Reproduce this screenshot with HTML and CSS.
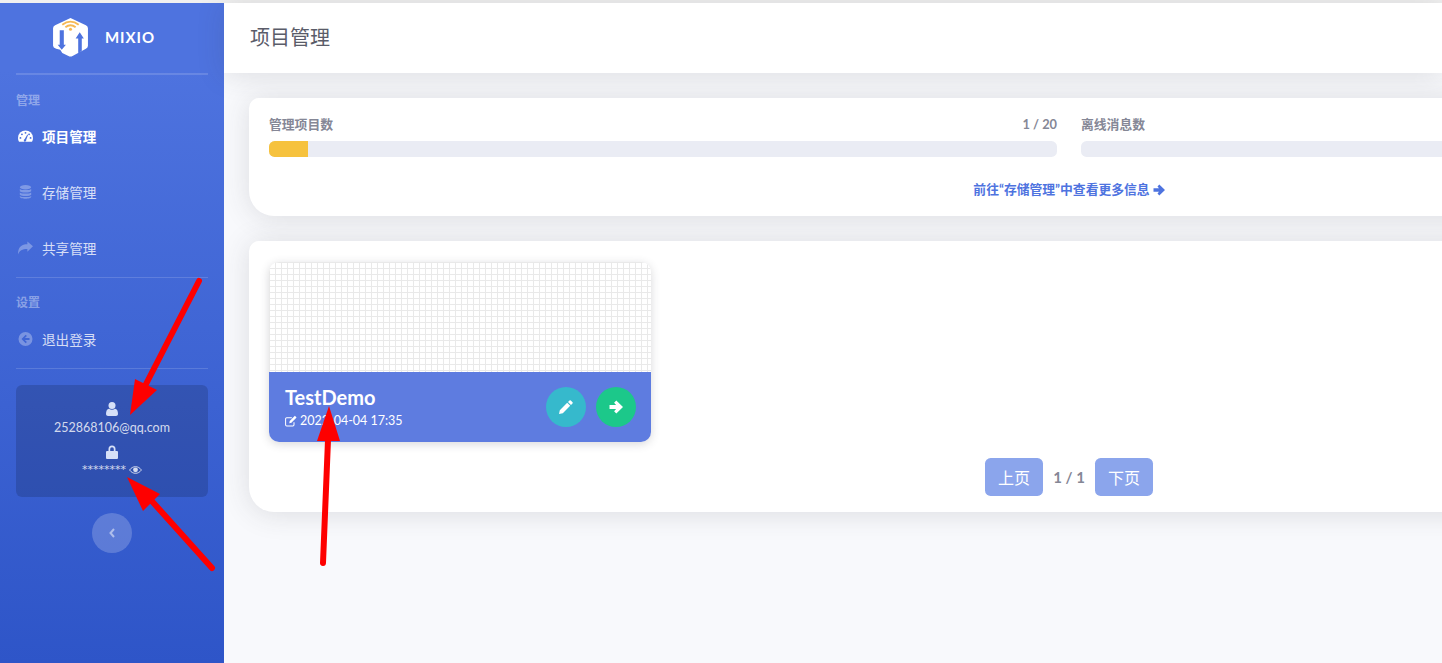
FILE: index.html
```html
<!DOCTYPE html>
<html lang="zh-CN">

<head>
  <meta charset="UTF-8">
  <meta name="viewport" content="width=device-width, initial-scale=1.0">
  <title>项目管理</title>
  <link rel="stylesheet" href="styles.css">
</head>

<body>
  <div class="wrapper">
    <aside class="sidebar">
      <a class="brand" href="#">
        <svg class="brand-logo" viewBox="0 0 34 38">
          <path fill="#fff" fill-rule="evenodd" d="M17 0 32 7Q34 8 34 10V27Q34 29 32 30L19 37Q17 38 15 37L9 34 7 31 3 30Q0 29 0 27V10Q0 8 2 7ZM6.500 12H10.500V26H12.500L8.500 31 4.500 26H6.500ZM26 14 30 20H28V32L24.500 34V20H22Z" />
          <path fill="none" stroke="#f6b955" stroke-width="1.800" d="M9 6.500Q17 .5 25 6.500M12 9Q17 5 22 9" />
          <circle cx="17" cy="11" r="1.500" fill="#f6b955" />
        </svg>
        <span>MIXIO</span>
      </a>
      <hr class="divider divider-top">
      <div class="side-heading">管理</div>
      <a class="nav-link active" href="#">
        <svg class="nav-icon" viewBox="0 0 16 12"><path d="M8 0a8 8 0 0 0-8 8c0 1.500.4 2.900 1.100 4h13.800A8 8 0 0 0 16 8a8 8 0 0 0-8-8z" /><g fill="#4a6fdc"><circle cx="2.600" cy="8" r="1" /><circle cx="4.200" cy="4.200" r="1" /><circle cx="8" cy="2.600" r="1" /><circle cx="13.400" cy="8" r="1" /><circle cx="11.800" cy="4.200" r="1" /><path d="M7 9.500l3-5 .7.300-2 5.500a1.300 1.300 0 1 1-1.700-.8z" /></g></svg>
        项目管理
      </a>
      <a class="nav-link" href="#">
        <svg class="nav-icon" viewBox="0 0 14 16"><ellipse cx="7" cy="2.500" rx="6.500" ry="2.500" /><path d="M.5 4.500C2 6.300 12 6.300 13.500 4.500V7C12 9 2 9 .5 7zM.5 8.500c1.500 1.800 11.500 1.800 13 0V11c-1.500 2-11.500 2-13 0zM.5 12.500c1.500 1.800 11.500 1.800 13 0v1c0 3-13 3-13 0z" /></svg>
        存储管理
      </a>
      <a class="nav-link" href="#">
        <svg class="nav-icon" viewBox="0 0 16 14"><path d="M16 5 10 0v3C4 3 0 5.500 0 14c1.500-4.500 4.500-6 10-6v3z" /></svg>
        共享管理
      </a>
      <hr class="divider divider-mid">
      <div class="side-heading heading-settings">设置</div>
      <a class="nav-link nav-logout" href="#">
        <svg class="nav-icon" viewBox="0 0 14 14"><path fill-rule="evenodd" d="M7 0a7 7 0 1 1 0 14A7 7 0 0 1 7 0zM7.200 2.800 3 7l4.200 4.200 1.200-1.200-2-2H11V6H6.400l2-2z" /></svg>
        退出登录
      </a>
      <hr class="divider">
      <div class="account-box">
        <svg class="account-icon" viewBox="0 0 12 14"><circle cx="6" cy="3.500" r="3.500" /><path d="M0 12c0-3 1-5 3-5.200 1.600 1.300 4.400 1.300 6 0 2 .2 3 2.200 3 5.200 0 1.300-1 2-2 2H2c-1 0-2-.7-2-2z" /></svg>
        <div class="account-text">252868106@qq.com</div>
        <svg class="account-icon icon-lock" viewBox="0 0 12 14"><path fill-rule="evenodd" d="M2.500 6V4a3.500 3.500 0 0 1 7 0v2h1.500a1 1 0 0 1 1 1v6a1 1 0 0 1-1 1H1a1 1 0 0 1-1-1V7a1 1 0 0 1 1-1zm1.700 0h3.600V4a1.800 1.800 0 0 0-3.600 0z" /></svg>
        <div class="account-text account-pass">
          ********
          <svg class="eye-icon" viewBox="0 0 14 10"><path fill="none" stroke="currentColor" stroke-width="1" d="M.6 5C4 .2 10 .2 13.400 5 10 9.800 4 9.800.6 5z" /><circle cx="7" cy="4.800" r="2.600" fill="currentColor" /></svg>
        </div>
      </div>
      <button class="toggle-btn" type="button">
        <svg viewBox="0 0 8 12"><path fill="none" stroke="currentColor" stroke-width="2" d="M6 2 2.500 6 6 10" /></svg>
      </button>
    </aside>

    <main class="main">
      <header class="topbar">
        <h1>项目管理</h1>
      </header>

      <div class="content">
        <section class="panel panel-stats">
          <div class="stat-row">
            <div class="stat">
              <div class="stat-label"><span>管理项目数</span><span>1 / 20</span></div>
              <div class="progress"><div class="progress-bar" style="width: 5%"></div></div>
            </div>
            <div class="stat">
              <div class="stat-label"><span>离线消息数</span></div>
              <div class="progress"></div>
            </div>
          </div>
          <a class="more-link" href="#">前往“存储管理”中查看更多信息
            <svg viewBox="0 0 12 12"><path d="M6.300.6 12 6l-5.700 5.400-1.800-1.800L6 7.800H.5V4.200H6L4.500 2.400z" /></svg>
          </a>
        </section>

        <section class="panel panel-projects">
          <article class="project-card">
            <div class="project-preview"></div>
            <div class="project-footer">
              <div class="project-info">
                <div class="project-name">TestDemo</div>
                <div class="project-date">
                  <svg viewBox="0 0 14 13"><path fill="none" stroke="#fff" stroke-width="1.200" d="M10.500 8v3a1.300 1.300 0 0 1-1.300 1.300H2A1.300 1.300 0 0 1 .7 11V4A1.300 1.300 0 0 1 2 2.700h6" /><path fill="#fff" d="M11.500.5 13.500 2.500 7.500 8.500 5 9 5.500 6.500z" /></svg>
                  2022-04-04 17:35
                </div>
              </div>
              <button class="round-btn btn-edit" type="button">
                <svg viewBox="0 0 14 14"><path d="M10.500.5a1 1 0 0 1 1.300 0l1.700 1.700a1 1 0 0 1 0 1.300L12 5 9 2zM8.200 2.800l3 3-7.400 7.400L0 14l.8-3.800z" /></svg>
              </button>
              <button class="round-btn btn-open" type="button">
                <svg viewBox="0 0 14 14"><path d="M7.300.6 14 7l-6.700 6.400-2.200-2.200 2-2.200H.5V5H7.100l-2-2.200z" /></svg>
              </button>
            </div>
          </article>
          <nav class="pager">
            <button class="page-btn" type="button">上页</button>
            <span class="page-count">1 / 1</span>
            <button class="page-btn" type="button">下页</button>
          </nav>
        </section>
      </div>
    </main>
  </div>

  <!-- annotations drawn over the screenshot -->
  <svg class="arrows" viewBox="0 0 1442 663">
    <g fill="#fe0000" stroke="#fe0000" stroke-linecap="round">
      <path fill="none" stroke-width="6" d="M199 281 144 388" />
      <path stroke="none" d="M130 415 135 379 157 390z" />
      <path fill="none" stroke-width="6" d="M212 568 150 499" />
      <path stroke="none" d="M127 477 160 494 143 511z" />
      <path fill="none" stroke-width="6" d="M323 563 328 440" />
      <path stroke="none" d="M329 406 317 441 340 441z" />
    </g>
  </svg>
</body>

</html>
```

FILE: styles.css
```css
* {
  box-sizing: border-box;
}

html,
body {
  height: 100%;
}

body {
  margin: 0;
  padding-top: 3px;
  overflow: hidden;
  background-color: #f0f0f0;
  font-family: "Lato", "Noto Sans CJK SC", sans-serif;
  color: #858796;
}

a {
  text-decoration: none;
}

button {
  border: 0;
  font-family: inherit;
  cursor: pointer;
}

.wrapper {
  display: flex;
  height: 660px;
}

/* sidebar */
.sidebar {
  flex: 0 0 224px;
  display: flex;
  flex-direction: column;
  padding: 0 16px;
  background-image: linear-gradient(180deg, #4e73df 10%, #2e55c8 100%);
}

.brand {
  display: flex;
  align-items: center;
  justify-content: center;
  gap: 17px;
  height: 70px;
  padding: 0 16px 2px 0;
  color: #fff;
  font-size: 15px;
  font-weight: 700;
  letter-spacing: 1px;
}

.brand-logo {
  width: 35px;
  height: 39px;
}

.divider {
  width: 100%;
  height: 0;
  margin: 0;
  border: 0;
  border-top: 1px solid rgba(255, 255, 255, .15);
}

.divider-top {
  border-top-width: 2px;
}

.divider-mid {
  margin-top: 1px;
}

.side-heading {
  margin-top: 18px;
  font-size: 12px;
  line-height: 16px;
  font-weight: 700;
  color: rgba(255, 255, 255, .4);
}

.heading-settings {
  margin-top: 17px;
}

.nav-link {
  display: flex;
  align-items: center;
  gap: 9px;
  height: 56px;
  padding-left: 2px;
  font-size: 13.6px;
  color: rgba(255, 255, 255, .8);
}

.nav-link.active {
  margin-top: -1px;
  color: #fff;
  font-weight: 700;
}

.nav-logout {
  height: 55px;
  margin-bottom: 2px;
}

.nav-icon {
  flex: none;
  width: 15px;
  height: 14px;
  fill: rgba(255, 255, 255, .3);
}

.active .nav-icon {
  fill: #fff;
}

.account-box {
  display: flex;
  flex-direction: column;
  align-items: center;
  height: 112px;
  margin-top: 16px;
  padding-top: 17px;
  border-radius: 6px;
  background-color: rgba(0, 0, 0, .15);
  color: rgba(255, 255, 255, .8);
}

.account-icon {
  width: 12px;
  height: 14px;
  fill: #d6e0f8;
}

.icon-lock {
  margin-top: 9px;
}

.account-text {
  margin-top: 4px;
  font-size: 12.5px;
  line-height: 16px;
}

.account-pass {
  display: flex;
  align-items: center;
  gap: 3px;
  margin-top: 3px;
  font-family: "DejaVu Sans", sans-serif;
  font-size: 11px;
}

.eye-icon {
  width: 13px;
  height: 10px;
}

.toggle-btn {
  display: flex;
  align-items: center;
  justify-content: center;
  align-self: center;
  width: 40px;
  height: 40px;
  margin-top: 16px;
  padding: 0;
  border-radius: 50%;
  background-color: rgba(255, 255, 255, .2);
  color: rgba(255, 255, 255, .5);
}

.toggle-btn svg {
  width: 8px;
  height: 12px;
}

/* main column */
.main {
  flex: 1;
  min-width: 0;
  background-color: #f8f9fc;
}

.topbar {
  display: flex;
  align-items: center;
  height: 70px;
  padding: 0 0 4px 26px;
  background-color: #fff;
  box-shadow: 0 2px 28px rgba(58, 59, 69, .15);
}

.topbar h1 {
  margin: 0;
  font-size: 20px;
  font-weight: 400;
  color: #5a5c69;
}

.content {
  width: 1640px;
  margin-left: 25px;
  padding-top: 25px;
}

.panel {
  border-radius: 10px 10px 25px 25px;
  background-color: #fff;
  box-shadow: 0 2px 28px rgba(58, 59, 69, .15);
}

.panel-stats {
  height: 118px;
  padding: 18px 20px 0;
}

.stat-row {
  display: flex;
  gap: 24px;
}

.stat {
  flex: 1;
}

.stat-label {
  display: flex;
  justify-content: space-between;
  font-size: 12.8px;
  line-height: 17px;
  font-weight: 700;
}

.progress {
  height: 16px;
  margin-top: 8px;
  overflow: hidden;
  border-radius: 5.6px;
  background-color: #eaecf4;
}

.progress-bar {
  height: 100%;
  background-color: #f6c23e;
}

.more-link {
  display: flex;
  align-items: center;
  justify-content: center;
  gap: 3px;
  margin-top: 24px;
  font-size: 12.8px;
  line-height: 17px;
  font-weight: 700;
  color: #4e73df;
}

.more-link svg {
  width: 12px;
  height: 12px;
  fill: currentColor;
}

.panel-projects {
  height: 271px;
  margin-top: 25px;
  padding: 21px 20px 0;
}

.project-card {
  width: 382px;
  height: 180px;
  overflow: hidden;
  border-radius: 10px;
  box-shadow: 0 2px 10px rgba(58, 59, 69, .2);
}

.project-preview {
  height: 110px;
  background-color: #fff;
  background-image:
    linear-gradient(#e9e9e9 1px, transparent 1px),
    linear-gradient(90deg, #e9e9e9 1px, transparent 1px);
  background-size: 6px 6px;
}

.project-footer {
  display: flex;
  align-items: center;
  gap: 10px;
  height: 70px;
  padding: 0 15px 0 16px;
  background-color: #5e7ce0;
  color: #fff;
}

.project-info {
  display: flex;
  flex-direction: column;
  gap: 3px;
  flex: 1;
}

.project-name {
  font-size: 20px;
  line-height: 24px;
  font-weight: 700;
}

.project-date {
  display: flex;
  align-items: center;
  gap: 3px;
  font-size: 12.5px;
  line-height: 18px;
}

.project-date svg {
  width: 12px;
  height: 12px;
}

.round-btn {
  display: flex;
  align-items: center;
  justify-content: center;
  width: 40px;
  height: 40px;
  padding: 0;
  border-radius: 50%;
}

.round-btn svg {
  width: 14px;
  height: 14px;
  fill: #fff;
}

.btn-edit {
  background-color: #36b9cc;
}

.btn-open {
  background-color: #1cc88a;
}

.pager {
  display: flex;
  align-items: center;
  justify-content: center;
  gap: 10px;
  margin-top: 16px;
}

.page-btn {
  width: 58px;
  height: 38px;
  padding: 0;
  border-radius: 5.6px;
  background-color: #8ba5ec;
  color: #fff;
  font-size: 16px;
}

.page-count {
  width: 32px;
  font-size: 15px;
  font-weight: 700;
  text-align: center;
  white-space: nowrap;
}

.arrows {
  position: absolute;
  top: 0;
  left: 0;
  width: 1442px;
  height: 663px;
  pointer-events: none;
}
```
